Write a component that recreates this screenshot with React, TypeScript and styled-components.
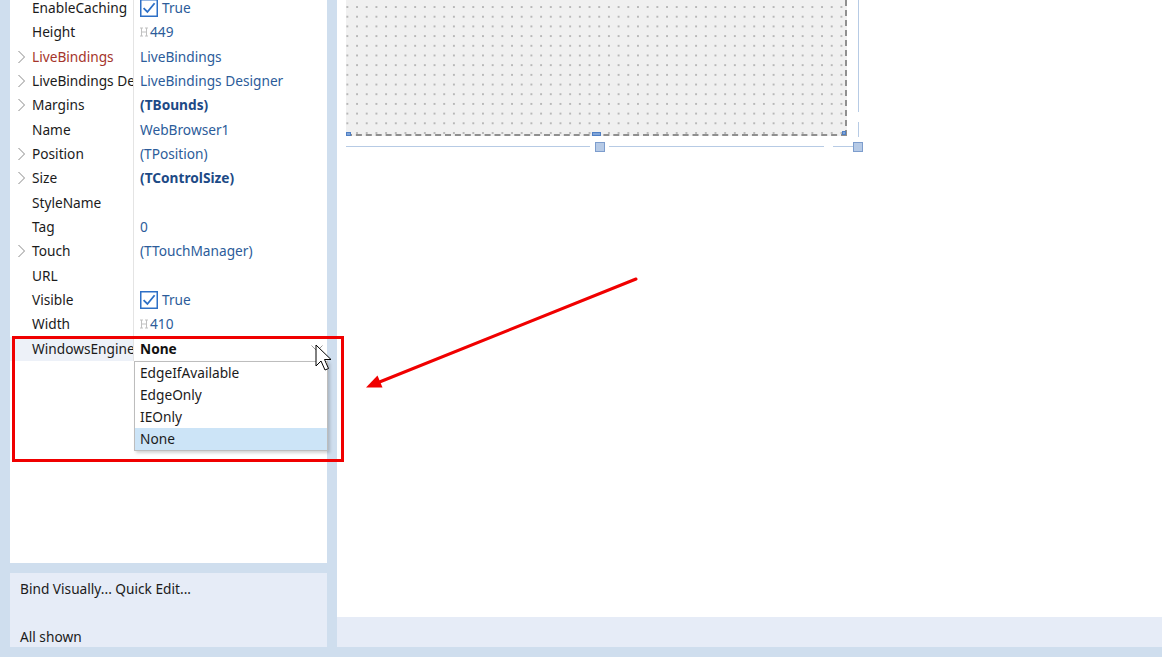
import React from 'react';
import styled, { createGlobalStyle } from 'styled-components';

const GlobalStyle = createGlobalStyle`
  html, body {
    margin: 0;
    padding: 0;
    background: #cfdeee;
  }
  body {
    font-family: "Noto Sans", "Open Sans", sans-serif;
  }
`;

const Shell = styled.div`
  position: relative;
  width: 1162px;
  height: 657px;
  box-sizing: border-box;
  padding: 0 0 10px 10px;
  display: flex;
  gap: 10px;
  background: #cfdeee;
  overflow: hidden;
`;

const LeftColumn = styled.div`
  width: 317px;
  display: flex;
  flex-direction: column;
  gap: 10px;
`;

const Inspector = styled.div`
  position: relative;
  flex: 1;
  background: #ffffff;
`;

const Grid = styled.div`
  margin-top: -4px;
  display: flex;
  flex-direction: column;
`;

const Row = styled.div`
  display: grid;
  grid-template-columns: 123px 1fr;
  height: 24.33px;
  font-size: 13.7px;
  line-height: 24.33px;
`;

const NameCell = styled.div<{ $selected?: boolean; $accent?: boolean }>`
  position: relative;
  padding-left: 22px;
  white-space: nowrap;
  overflow: hidden;
  color: ${p => (p.$accent ? '#a5352b' : '#1b1b1b')};
  background: ${p => (p.$selected ? '#edf1f8' : 'transparent')};
`;

const Chevron = styled.span`
  position: absolute;
  left: 6px;
  top: 5px;
  width: 10px;
  height: 14px;
  display: flex;
`;

const ValueCell = styled.div<{ $bold?: boolean; $plain?: boolean }>`
  position: relative;
  border-left: 1px solid #e4e4e4;
  padding-left: 6px;
  display: flex;
  align-items: center;
  gap: 4px;
  white-space: nowrap;
  font-weight: ${p => (p.$bold ? 700 : 400)};
  color: ${p => (p.$plain ? '#111111' : p.$bold ? '#1d4a86' : '#2c5c9a')};
`;

const SpinValue = styled.span`
  margin-left: -2px;
`;

const ComboArrow = styled.span`
  position: absolute;
  right: 4px;
  top: 8px;
  display: flex;
`;

const DropList = styled.div`
  position: absolute;
  left: 124px;
  top: 361px;
  width: 194px;
  box-sizing: border-box;
  border: 1px solid #bdbdbd;
  background: #ffffff;
  box-shadow: 2px 2px 3px rgba(0, 0, 0, 0.18);
  display: flex;
  flex-direction: column;
  z-index: 2;
`;

const DropItem = styled.div<{ $active?: boolean }>`
  height: 22px;
  line-height: 22px;
  padding-left: 5px;
  font-size: 13.7px;
  color: #1b1b1b;
  background: ${p => (p.$active ? '#cce4f7' : 'transparent')};
`;

const BottomPanel = styled.div`
  height: 74px;
  box-sizing: border-box;
  padding: 5px 10px 0;
  background: #e6ecf7;
  display: flex;
  flex-direction: column;
  justify-content: space-between;
  font-size: 13.7px;
  color: #1b1b1b;
`;

const PanelLine = styled.div`
  height: 21px;
  line-height: 21px;
`;

const RightColumn = styled.div`
  flex: 1;
  display: flex;
  flex-direction: column;
`;

const Designer = styled.div`
  position: relative;
  flex: 1;
  background: #ffffff;
  overflow: hidden;
`;

const StatusStrip = styled.div`
  height: 30px;
  background: #e6ecf7;
`;

const FormSurface = styled.div`
  position: absolute;
  left: 9px;
  top: 0;
  width: 499px;
  height: 134px;
  background-color: #f0f0f0;
  background-image: radial-gradient(circle, #a9a9a9 0.6px, transparent 1px);
  background-size: 9.7px 9.7px;
  background-position: 6.2px 2.2px;
  border-right: 2px dashed #8f8f8f;
  border-bottom: 2px dashed #8f8f8f;
`;

const Grip = styled.div<{ $w: number; $h: number }>`
  position: absolute;
  width: ${p => p.$w}px;
  height: ${p => p.$h}px;
  background: #7fa4d8;
  border: 1px solid #4f7fc4;
  box-sizing: border-box;
`;

const GuideH = styled.div`
  position: absolute;
  top: 146px;
  height: 1px;
  background: #b7cbe5;
`;

const GuideV = styled.div`
  position: absolute;
  left: 521px;
  width: 1px;
  background: #b7cbe5;
`;

const GuideSquare = styled.div`
  position: absolute;
  top: 142px;
  width: 10px;
  height: 10px;
  box-sizing: border-box;
  background: #b6cae6;
  border: 1px solid #7d9dcd;
`;

const Highlight = styled.div`
  position: absolute;
  left: 12px;
  top: 336px;
  width: 332px;
  height: 126px;
  box-sizing: border-box;
  border: 3px solid #f00000;
  pointer-events: none;
  z-index: 5;
`;

const Overlay = styled.svg`
  position: absolute;
  left: 0;
  top: 0;
  pointer-events: none;
  z-index: 6;
`;

const Check = () => (
  <svg width="18" height="18" viewBox="0 0 18 18">
    <rect x="0.75" y="0.75" width="16.5" height="16.5" fill="#fff" stroke="#2d6fc6" strokeWidth="1.5" />
    <path d="M3.6 9.2 L7.4 13 L14.6 4.2" fill="none" stroke="#2d6fc6" strokeWidth="1.8" />
  </svg>
);

const Spin = () => (
  <svg width="8" height="10" viewBox="0 0 8 10">
    <path d="M1.5 1 V9 M6.5 1 V9 M1.5 5 H6.5 M0 1 H3 M5 1 H8 M0 9 H3 M5 9 H8" stroke="#c0c0c0" strokeWidth="1" fill="none" />
  </svg>
);

const Arrow = () => (
  <svg width="10" height="14" viewBox="0 0 10 14">
    <path d="M2.5 1 L8.5 7 L2.5 13" fill="none" stroke="#8a8a8a" strokeWidth="1" />
  </svg>
);

type Prop = {
  name: string;
  value?: string;
  expand?: boolean;
  accent?: boolean;
  bold?: boolean;
  kind?: 'check' | 'spin';
};

const props: Prop[] = [
  { name: 'EnableCaching', value: 'True', kind: 'check' },
  { name: 'Height', value: '449', kind: 'spin' },
  { name: 'LiveBindings', value: 'LiveBindings', expand: true, accent: true },
  { name: 'LiveBindings Designer', value: 'LiveBindings Designer', expand: true },
  { name: 'Margins', value: '(TBounds)', expand: true, bold: true },
  { name: 'Name', value: 'WebBrowser1' },
  { name: 'Position', value: '(TPosition)', expand: true },
  { name: 'Size', value: '(TControlSize)', expand: true, bold: true },
  { name: 'StyleName' },
  { name: 'Tag', value: '0' },
  { name: 'Touch', value: '(TTouchManager)', expand: true },
  { name: 'URL' },
  { name: 'Visible', value: 'True', kind: 'check' },
  { name: 'Width', value: '410', kind: 'spin' },
];

const engines = ['EdgeIfAvailable', 'EdgeOnly', 'IEOnly', 'None'];

export default function App() {
  return (
    <>
      <GlobalStyle />
      <Shell>
        <LeftColumn>
          <Inspector>
            <Grid>
              {props.map(p => (
                <Row key={p.name}>
                  <NameCell $accent={p.accent}>
                    {p.expand && (
                      <Chevron>
                        <Arrow />
                      </Chevron>
                    )}
                    {p.name}
                  </NameCell>
                  <ValueCell $bold={p.bold}>
                    {p.kind === 'check' && <Check />}
                    {p.kind === 'spin' && <Spin />}
                    {p.value && (p.kind === 'spin' ? <SpinValue>{p.value}</SpinValue> : <span>{p.value}</span>)}
                  </ValueCell>
                </Row>
              ))}
              <Row>
                <NameCell $selected>WindowsEngine</NameCell>
                <ValueCell $bold $plain>
                  None
                  <ComboArrow>
                    <svg width="12" height="7" viewBox="0 0 12 7">
                      <path d="M0.5 0.5 L6 6 L11.5 0.5" fill="none" stroke="#9a9a9a" strokeWidth="1" />
                    </svg>
                  </ComboArrow>
                </ValueCell>
              </Row>
            </Grid>
            <DropList>
              {engines.map(e => (
                <DropItem key={e} $active={e === 'None'}>
                  {e}
                </DropItem>
              ))}
            </DropList>
          </Inspector>
          <BottomPanel>
            <PanelLine>Bind Visually... Quick Edit...</PanelLine>
            <PanelLine>All shown</PanelLine>
          </BottomPanel>
        </LeftColumn>
        <RightColumn>
          <Designer>
            <FormSurface>
              <Grip $w={5} $h={4} style={{ left: 0, bottom: -2 }} />
              <Grip $w={9} $h={4} style={{ left: 246, bottom: -2 }} />
              <Grip $w={4} $h={4} style={{ right: -1, bottom: -1 }} />
            </FormSurface>
            <GuideH style={{ left: 9, width: 244 }} />
            <GuideH style={{ left: 272, width: 215 }} />
            <GuideH style={{ left: 496, width: 20 }} />
            <GuideV style={{ top: 0, height: 112 }} />
            <GuideV style={{ top: 122, height: 15 }} />
            <GuideSquare style={{ left: 258 }} />
            <GuideSquare style={{ left: 516 }} />
          </Designer>
          <StatusStrip />
        </RightColumn>
        <Highlight />
        <Overlay width="1162" height="657" viewBox="0 0 1162 657">
          <line x1="636" y1="279" x2="377" y2="383" stroke="#f00000" strokeWidth="3" strokeLinecap="round" />
          <polygon points="366,387.5 382.5,387.5 377.5,375.5" fill="#f00000" />
          <path
            d="M316 345 L316 366 L321 361 L325 370 L328.5 368.5 L324.5 359.5 L331 359.5 Z"
            fill="#ffffff"
            stroke="#000000"
            strokeWidth="1"
            strokeLinejoin="round"
          />
        </Overlay>
      </Shell>
    </>
  );
}
